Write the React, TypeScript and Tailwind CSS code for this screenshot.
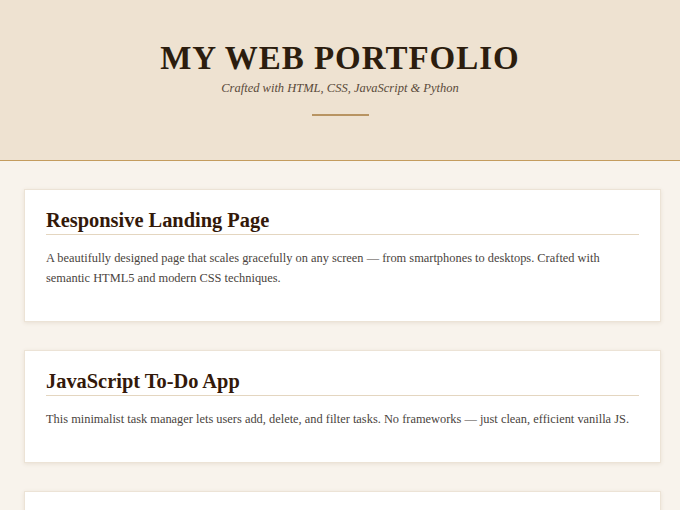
const projects = [
  {
    title: "Responsive Landing Page",
    body: "A beautifully designed page that scales gracefully on any screen — from smartphones to desktops. Crafted with semantic HTML5 and modern CSS techniques.",
  },
  {
    title: "JavaScript To-Do App",
    body: "This minimalist task manager lets users add, delete, and filter tasks. No frameworks — just clean, efficient vanilla JS.",
  },
  {
    title: "Python Data Dashboard",
    body: "An interactive dashboard built with Python that visualizes data in clear, readable charts.",
  },
];

function ProjectCard({ title, body }: { title: string; body: string }) {
  return (
    <section className="bg-white border border-[#ece3d6] shadow-[0_1px_4px_rgba(120,90,50,0.12)] px-[21px] pt-[19px] pb-[33px]">
      <h2 className="text-[20.4px] leading-[22px] font-bold text-[#33190a] border-b border-[#e4d6c0] pb-[3px]">
        {title}
      </h2>
      <p className="mt-[13px] text-[12.4px] leading-[20px] text-[#4a4440]">{body}</p>
    </section>
  );
}

export default function App() {
  return (
    <div className="min-h-screen bg-[#f8f3ec] font-['Liberation_Serif',serif]">
      <header className="bg-[#eee2d1] border-b border-[#c49c5e] pt-[38px] pb-[44px] text-center">
        <h1 className="text-[33px] leading-[40px] font-bold tracking-[1px] text-[#2c1d0e]">
          MY WEB PORTFOLIO
        </h1>
        <p className="mt-[2px] text-[12.5px] leading-[17px] italic text-[#5a4a3a]">
          Crafted with HTML, CSS, JavaScript &amp; Python
        </p>
        <div className="mx-auto mt-[17px] h-[2px] w-[57px] bg-[#b89462]" />
      </header>
      <main className="pl-[24px] pr-[19px] pt-[28px] flex flex-col gap-[28px]">
        {projects.map((p) => (
          <ProjectCard key={p.title} title={p.title} body={p.body} />
        ))}
      </main>
    </div>
  );
}
